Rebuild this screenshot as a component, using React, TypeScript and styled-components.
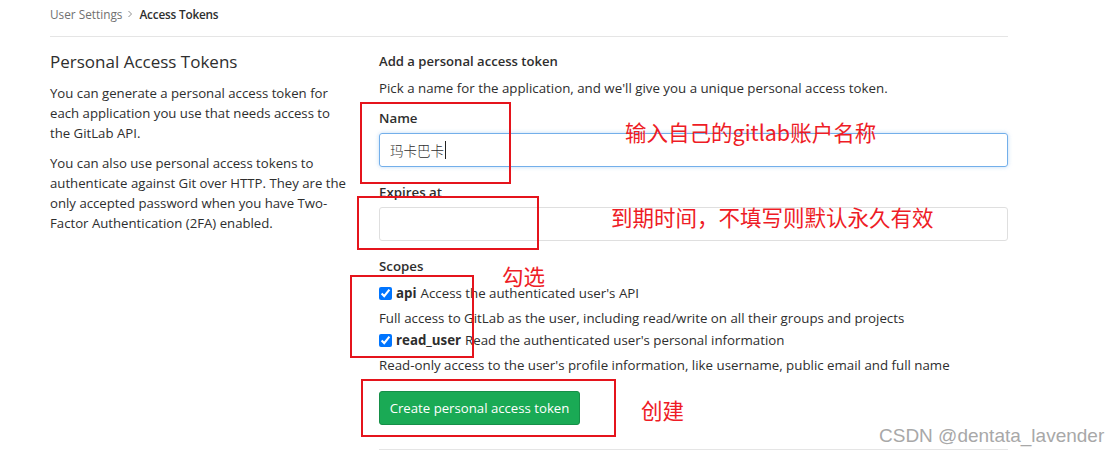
import React from "react";
import styled, { createGlobalStyle } from "styled-components";

const GlobalStyle = createGlobalStyle`
  html, body {
    margin: 0;
    padding: 0;
    background: #fff;
  }
  body {
    font-family: "Open Sans", "Noto Sans", "Noto Sans CJK SC", sans-serif;
    color: #2e2e2e;
  }
`;

const Page = styled.div`
  position: relative;
  width: 1119px;
  height: 454px;
  overflow: hidden;
  padding-left: 50px;
  box-sizing: border-box;
`;

const Container = styled.div`
  width: 958px;
`;

const Breadcrumb = styled.div`
  display: flex;
  align-items: center;
  height: 28px;
  padding-bottom: 8px;
  border-bottom: 1px solid #e5e5e5;
  font-size: 11.8px;
  line-height: 18px;
`;

const Crumb = styled.span<{ $current?: boolean }>`
  color: ${(p) => (p.$current ? "#2e2e2e" : "#707070")};
  font-weight: ${(p) => (p.$current ? 600 : 400)};
  letter-spacing: ${(p) => (p.$current ? "-0.2px" : "0")};
`;

const Chevron = styled.span`
  display: inline-flex;
  margin: 0 5px 0 4px;
  color: #8f8f8f;
`;

const Row = styled.div`
  display: grid;
  grid-template-columns: 299px 629px;
  column-gap: 30px;
  padding-top: 13px;
`;

const Side = styled.div`
  font-size: 13.2px;
  line-height: 20px;
`;

const SideTitle = styled.h4`
  margin: 0 0 9px;
  font-size: 17px;
  line-height: 24px;
  font-weight: 400;
  color: #2e2e2e;
`;

const SideText = styled.p`
  margin: 0 0 10px;
`;

const Form = styled.div`
  display: flex;
  flex-direction: column;
  font-size: 13.3px;
  line-height: 20px;
`;

const FormTitle = styled.h5`
  margin: 0 0 6px;
  font-size: 13.1px;
  line-height: 22px;
  font-weight: 600;
`;

const Hint = styled.p<{ $top?: number }>`
  margin: ${(p) => p.$top ?? 0}px 0 0;
`;

const Label = styled.label<{ $top: number }>`
  margin-top: ${(p) => p.$top}px;
  margin-bottom: 5px;
  font-weight: 600;
`;

const Field = styled.div<{ $focused?: boolean }>`
  display: flex;
  align-items: center;
  height: 34px;
  box-sizing: border-box;
  padding: 0 10px;
  border: 1px solid ${(p) => (p.$focused ? "#73afea" : "#dfdfdf")};
  border-radius: 3px;
  box-shadow: ${(p) =>
    p.$focused ? "0 0 4px rgba(115, 175, 234, 0.45)" : "none"};
  font-family: "Noto Sans CJK SC", sans-serif;
  font-size: 13.5px;
  font-weight: 300;
  color: #2e2e2e;
`;

const Caret = styled.span`
  width: 1px;
  height: 18px;
  background: #222;
  margin-left: 1px;
`;

const ScopeRow = styled.label<{ $top: number }>`
  display: flex;
  align-items: center;
  margin-top: ${(p) => p.$top}px;
`;

const Check = styled.input`
  width: 13px;
  height: 13px;
  margin: 0 4px 0 0;
  accent-color: #0075ff;
`;

const ScopeName = styled.b`
  font-weight: 700;
  margin-right: 4px;
`;

const CreateButton = styled.button`
  align-self: flex-start;
  margin-top: 16px;
  height: 34px;
  width: 201px;
  padding: 0;
  border: 1px solid #168f48;
  border-radius: 3px;
  background: #1aaa55;
  color: #fff;
  font-family: "Open Sans", sans-serif;
  font-size: 13.2px;
`;

const Divider = styled.div`
  margin-top: 24px;
  border-top: 1px solid #e5e5e5;
`;

const Box = styled.div`
  position: absolute;
  border: 2px solid #e5141c;
  box-sizing: border-box;
`;

const Note = styled.div`
  position: absolute;
  color: #ee1c26;
  font-family: "Noto Sans CJK SC", sans-serif;
  font-size: 21.5px;
  line-height: 24px;
  white-space: nowrap;
`;

const Watermark = styled.div`
  position: absolute;
  left: 879px;
  top: 424px;
  color: #a8a8a8;
  font-family: "Liberation Sans", sans-serif;
  font-size: 19px;
  line-height: 24px;
  text-shadow: 0 0 1px rgba(255, 255, 255, 0.9);
`;

const boxes = [
  { left: 360, top: 102, width: 151, height: 82 },
  { left: 357, top: 196, width: 182, height: 54 },
  { left: 350, top: 275, width: 124, height: 83 },
  { left: 361, top: 379, width: 255, height: 58 },
];

const notes = [
  { left: 625, top: 120, text: "输入自己的gitlab账户名称" },
  { left: 611, top: 205, text: "到期时间，不填写则默认永久有效" },
  { left: 502, top: 264, text: "勾选" },
  { left: 641, top: 398, text: "创建" },
];

function ChevronIcon(): JSX.Element {
  return (
    <svg width="8" height="8" viewBox="0 0 8 8">
      <path d="M2.5 1 L5.5 4 L2.5 7" fill="none" stroke="currentColor" strokeWidth="1" />
    </svg>
  );
}

function App(): JSX.Element {
  return (
    <Page>
      <GlobalStyle />
      <Container>
        <Breadcrumb>
          <Crumb>User Settings</Crumb>
          <Chevron>
            <ChevronIcon />
          </Chevron>
          <Crumb $current>Access Tokens</Crumb>
        </Breadcrumb>
        <Row>
          <Side>
            <SideTitle>Personal Access Tokens</SideTitle>
            <SideText>
              You can generate a personal access token for each application you
              use that needs access to the GitLab API.
            </SideText>
            <SideText>
              You can also use personal access tokens to authenticate against
              Git over HTTP. They are the only accepted password when you have
              Two-Factor Authentication (2FA) enabled.
            </SideText>
          </Side>
          <Form>
            <FormTitle>Add a personal access token</FormTitle>
            <Hint>
              Pick a name for the application, and we'll give you a unique
              personal access token.
            </Hint>
            <Label $top={10}>Name</Label>
            <Field $focused>
              玛卡巴卡
              <Caret />
            </Field>
            <Label $top={15}>Expires at</Label>
            <Field />
            <Label $top={15}>Scopes</Label>
            <ScopeRow $top={2}>
              <Check type="checkbox" checked readOnly />
              <ScopeName>api</ScopeName>
              Access the authenticated user's API
            </ScopeRow>
            <Hint $top={5}>
              Full access to GitLab as the user, including read/write on all
              their groups and projects
            </Hint>
            <ScopeRow $top={2}>
              <Check type="checkbox" checked readOnly />
              <ScopeName>read_user</ScopeName>
              Read the authenticated user's personal information
            </ScopeRow>
            <Hint $top={5}>
              Read-only access to the user's profile information, like
              username, public email and full name
            </Hint>
            <CreateButton>Create personal access token</CreateButton>
            <Divider />
          </Form>
        </Row>
      </Container>
      {boxes.map((b, i) => (
        <Box
          key={i}
          style={{ left: b.left, top: b.top, width: b.width, height: b.height }}
        />
      ))}
      {notes.map((n, i) => (
        <Note key={i} style={{ left: n.left, top: n.top }}>
          {n.text}
        </Note>
      ))}
      <Watermark>CSDN @dentata_lavender</Watermark>
    </Page>
  );
}

export default App;
